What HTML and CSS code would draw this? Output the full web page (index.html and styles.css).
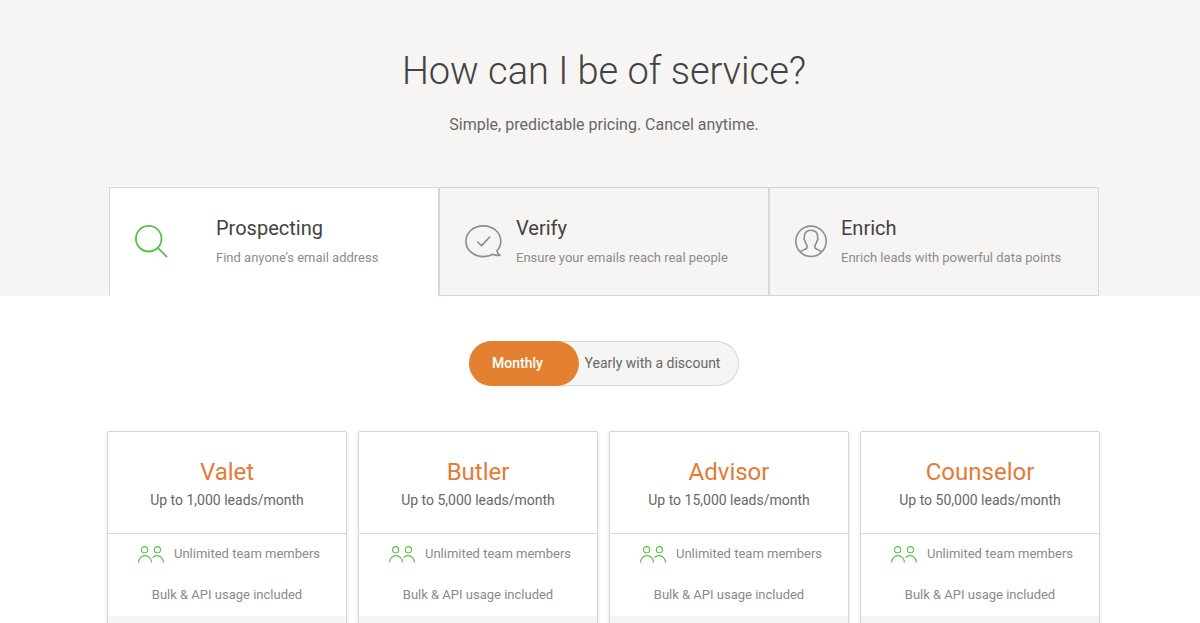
FILE: index.html
```html
<!DOCTYPE html>
<html lang="en">
<head>
<meta charset="utf-8">
<meta name="viewport" content="width=device-width, initial-scale=1">
<title>Pricing</title>
<link rel="stylesheet" href="styles.css">
</head>
<body>
<svg class="sprite" aria-hidden="true">
  <symbol id="team" viewBox="0 0 26 17">
    <g fill="none" stroke="currentColor" stroke-width="1.1">
      <circle cx="6.600" cy="3.700" r="3.100"/>
      <circle cx="19.400" cy="3.700" r="3.100"/>
      <path d="M.6 16.500C.6 12.500 3.300 9.600 7 9.600s6.400 2.900 6.400 6.900M14.500 11.600c1.200-1.300 2.800-2 4.500-2 3.700 0 6.400 2.900 6.400 6.900"/>
    </g>
  </symbol>
</svg>
<header class="hero">
  <h1 class="hero-title">How can I be of service?</h1>
  <p class="hero-text">Simple, predictable pricing. Cancel anytime.</p>
  <div class="tabs" role="tablist">
    <button class="tab tab-active" type="button" role="tab" aria-selected="true">
      <svg class="tab-icon tab-icon-search" viewBox="0 0 33 33" width="33" height="33" fill="none" stroke="currentColor" stroke-width="1.800" aria-hidden="true">
        <circle cx="13.700" cy="13.700" r="12.800"/><path d="M22.800 22.800l8.800 8.800" stroke-linecap="round"/>
      </svg>
      <span class="tab-body"><span class="tab-title">Prospecting</span><span class="tab-text">Find anyone’s email address</span></span>
    </button>
    <button class="tab" type="button" role="tab" aria-selected="false">
      <svg class="tab-icon" viewBox="0 0 37 33" width="37" height="33" fill="none" stroke="currentColor" stroke-width="1.600" stroke-linecap="round" stroke-linejoin="round" aria-hidden="true">
        <path d="M27.800 29.300C25 31 21.800 31.600 18.300 31.600 8.600 31.600.9 25 .9 16.200S8.600.9 18.300.9s17.500 6.500 17.500 15.300c0 3.700-1.500 7-3.900 9.600.4 2 1.500 3.400 3.100 4.400-2.600.5-5 .2-7.200-.9z"/>
        <path d="M12.700 17l3.800 3.600 8-8.400"/>
      </svg>
      <span class="tab-body"><span class="tab-title">Verify</span><span class="tab-text">Ensure your emails reach real people</span></span>
    </button>
    <button class="tab" type="button" role="tab" aria-selected="false">
      <svg class="tab-icon" viewBox="0 0 32 33" width="32" height="33" fill="none" stroke="currentColor" stroke-width="1.600" stroke-linejoin="round" aria-hidden="true">
        <circle cx="16" cy="16.300" r="15.200"/>
        <path d="M4.900 27c1.900-1.600 6.300-2.600 7-4.100.5-1.200.2-2.600-.5-3.600-.9-1.300-1.300-2.600-1.500-3.900-.8-.5-1.100-2.200-.5-3C8.900 7.700 11.600 5.300 16 5.300s7.100 2.400 6.600 7.100c.6.800.3 2.500-.5 3-.2 1.300-.6 2.600-1.500 3.900-.7 1-1 2.400-.5 3.600.7 1.500 5.100 2.500 7 4.100"/>
      </svg>
      <span class="tab-body"><span class="tab-title">Enrich</span><span class="tab-text">Enrich leads with powerful data points</span></span>
    </button>
  </div>
</header>
<main class="main">
  <div class="toggle" role="group" aria-label="Billing period">
    <button class="toggle-option toggle-active" type="button" aria-pressed="true">Monthly</button>
    <button class="toggle-option" type="button" aria-pressed="false">Yearly with a discount</button>
  </div>
  <div class="plans">
    <section class="plan">
      <div class="plan-head"><h2 class="plan-name">Valet</h2><p class="plan-leads">Up to 1,000 leads/month</p></div>
      <div class="plan-features"><p class="feature"><svg class="team-icon" aria-hidden="true"><use href="#team"/></svg>Unlimited team members</p><p class="feature">Bulk &amp; API usage included</p></div>
      <div class="plan-foot"></div>
    </section>
    <section class="plan">
      <div class="plan-head"><h2 class="plan-name">Butler</h2><p class="plan-leads">Up to 5,000 leads/month</p></div>
      <div class="plan-features"><p class="feature"><svg class="team-icon" aria-hidden="true"><use href="#team"/></svg>Unlimited team members</p><p class="feature">Bulk &amp; API usage included</p></div>
      <div class="plan-foot"></div>
    </section>
    <section class="plan">
      <div class="plan-head"><h2 class="plan-name">Advisor</h2><p class="plan-leads">Up to 15,000 leads/month</p></div>
      <div class="plan-features"><p class="feature"><svg class="team-icon" aria-hidden="true"><use href="#team"/></svg>Unlimited team members</p><p class="feature">Bulk &amp; API usage included</p></div>
      <div class="plan-foot"></div>
    </section>
    <section class="plan">
      <div class="plan-head"><h2 class="plan-name">Counselor</h2><p class="plan-leads">Up to 50,000 leads/month</p></div>
      <div class="plan-features"><p class="feature"><svg class="team-icon" aria-hidden="true"><use href="#team"/></svg>Unlimited team members</p><p class="feature">Bulk &amp; API usage included</p></div>
      <div class="plan-foot"></div>
    </section>
  </div>
</main>
</body>
</html>
```
FILE: styles.css
```css
* { box-sizing: border-box; }
body {
  margin: 0;
  background: #fff;
  color: #676767;
  font-family: Roboto, "Liberation Sans", sans-serif;
}
h1, h2, p { margin: 0; }
button { font: inherit; color: inherit; border: 0; margin: 0; cursor: pointer; }
.sprite { display: none; }
.hero {
  background: #f6f5f3;
  padding: 44px 0 0 8px;
  text-align: center;
}
.hero-title {
  color: #424242;
  font-size: 38px;
  font-weight: 300;
  line-height: 54px;
}
.hero-text {
  margin-top: 15px;
  font-size: 16px;
  line-height: 24px;
}
.tabs {
  display: grid;
  grid-template-columns: repeat(3, 1fr);
  max-width: 990px;
  margin: 50px auto 0;
}
.tab {
  display: flex;
  align-items: center;
  gap: 14px;
  padding: 22px 24px 23px 25px;
  background: #f6f5f3;
  border: 1px solid #dad6d1;
  color: #8c8c8c;
  text-align: left;
}
.tab-active { background: #fff; border-bottom-color: #fff; }
.tab-icon { flex: none; }
.tab-icon-search { color: #5bbf4b; margin-right: 34px; }
.tab-body { padding-top: 2px; }
.tab-title {
  display: block;
  color: #424242;
  font-size: 20px;
  line-height: 32px;
}
.tab-text {
  display: block;
  font-size: 13px;
  line-height: 28px;
}
.main { padding: 45px 0 0 7px; }
.toggle {
  display: flex;
  width: 270px;
  margin: 0 auto;
  border-radius: 23px;
  background: #f6f5f3;
  box-shadow: inset 0 0 0 1px #dad6d1;
}
.toggle-option {
  flex: 1;
  height: 45px;
  padding: 0 12px 2px 0;
  background: none;
  border-radius: 23px;
  font-size: 14px;
  white-space: nowrap;
}
.toggle-active {
  flex: none;
  width: 110px;
  background: #e38130;
  color: #fff;
  font-weight: 500;
}
.plans {
  display: grid;
  grid-template-columns: repeat(4, 1fr);
  gap: 11px;
  max-width: 993px;
  margin: 45px auto 0;
}
.plan {
  border: 1px solid #dad6d1;
  border-radius: 2px;
  box-shadow: 0 1px 4px rgba(0, 0, 0, .12);
  text-align: center;
}
.plan-head {
  padding: 24px 0 20px;
  border-bottom: 1px solid #dad6d1;
}
.plan-name {
  color: #e37b38;
  font-size: 24px;
  font-weight: 400;
  line-height: 32px;
}
.plan-leads { font-size: 14px; line-height: 25px; }
.plan-features {
  display: grid;
  gap: 17px;
  padding: 8px 0 9px;
  color: #8a8a8a;
}
.feature {
  display: flex;
  align-items: center;
  justify-content: center;
  font-size: 13px;
  line-height: 24px;
}
.team-icon {
  width: 26px;
  height: 17px;
  margin: 0 10px 0 4px;
  color: #5bbf4b;
}
.plan-foot { height: 80px; background: #f6f5f3; }
```
